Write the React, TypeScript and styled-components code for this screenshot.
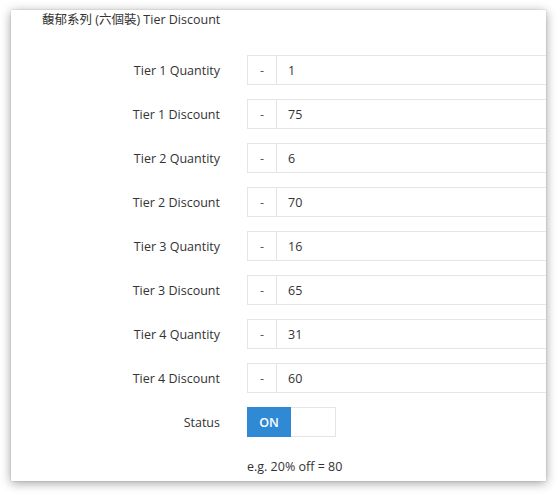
import React from "react";
import styled, { createGlobalStyle } from "styled-components";

const GlobalStyle = createGlobalStyle`
  html, body {
    margin: 0;
    padding: 0;
    background: #ffffff;
  }
  body {
    font-family: "Open Sans", "Noto Sans CJK TC", sans-serif;
    font-size: 12.5px;
    color: #333333;
  }
`;

const tiers = [
  { label: "Tier 1 Quantity", value: "1" },
  { label: "Tier 1 Discount", value: "75" },
  { label: "Tier 2 Quantity", value: "6" },
  { label: "Tier 2 Discount", value: "70" },
  { label: "Tier 3 Quantity", value: "16" },
  { label: "Tier 3 Discount", value: "65" },
  { label: "Tier 4 Quantity", value: "31" },
  { label: "Tier 4 Discount", value: "60" },
];

export default function App() {
  return (
    <>
      <GlobalStyle />
      <Page>
        <Card>
          <Title>馥郁系列 (六個裝) Tier Discount</Title>
          <Form>
            {tiers.map((t) => (
              <Row key={t.label}>
                <Label>{t.label}</Label>
                <InputGroup>
                  <Addon>-</Addon>
                  <TextInput defaultValue={t.value} />
                </InputGroup>
              </Row>
            ))}
            <Row>
              <Label>Status</Label>
              <Switch>
                <SwitchOn>ON</SwitchOn>
                <SwitchOff />
              </Switch>
            </Row>
            <Row>
              <span />
              <Help>e.g. 20% off = 80</Help>
            </Row>
          </Form>
        </Card>
      </Page>
    </>
  );
}

const Page = styled.div`
  width: 559px;
  height: 495px;
  padding: 10px 0 0 11px;
  box-sizing: border-box;
`;

const Card = styled.div`
  width: 535px;
  height: 471px;
  background: #ffffff;
  overflow: hidden;
  box-shadow: 0 2px 10px rgba(0, 0, 0, 0.38), 0 0 1px rgba(0, 0, 0, 0.25);
`;

const Title = styled.div`
  padding: 1px 0 0 31px;
  line-height: 18px;
  color: #333333;
`;

const Form = styled.div`
  display: flex;
  flex-direction: column;
  gap: 14px;
  margin-top: 26px;
`;

const Row = styled.div`
  display: grid;
  grid-template-columns: 209px 1fr;
  column-gap: 27px;
  align-items: center;
  min-height: 30px;

  &:last-child {
    margin-top: 1px;
  }
`;

const Label = styled.label`
  text-align: right;
  color: #333333;
  line-height: 18px;
  padding-top: 2px;
`;

const InputGroup = styled.div`
  display: flex;
  width: 420px;
  height: 30px;
  border: 1px solid #e5e5e5;
  box-sizing: border-box;
`;

const Addon = styled.span`
  width: 28px;
  flex: none;
  display: flex;
  align-items: center;
  justify-content: center;
  color: #555555;
  border-right: 1px solid #e5e5e5;
`;

const TextInput = styled.input`
  flex: 1;
  border: none;
  outline: none;
  padding: 0 11px;
  font: inherit;
  color: #333333;
  background: #ffffff;
`;

const Switch = styled.div`
  display: flex;
  width: 89px;
  height: 30px;
  border: 1px solid #e5e5e5;
  box-sizing: border-box;
`;

const SwitchOn = styled.span`
  width: 44px;
  display: flex;
  align-items: center;
  justify-content: center;
  background: #3089d5;
  color: #ffffff;
  font-weight: 600;
  margin: -1px 0 -1px -1px;
`;

const SwitchOff = styled.span`
  flex: 1;
  background: #ffffff;
`;

const Help = styled.div`
  line-height: 18px;
  color: #333333;
`;
